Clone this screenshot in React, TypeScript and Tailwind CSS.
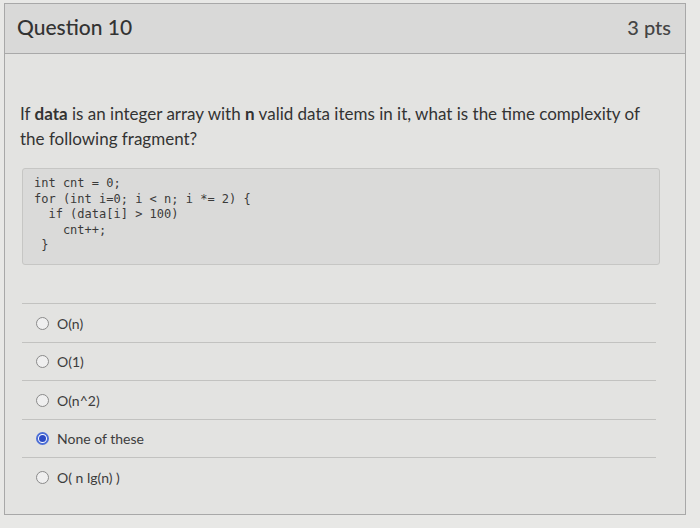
import React from 'react';

const answers = [
  { label: 'O(n)', selected: false },
  { label: 'O(1)', selected: false },
  { label: 'O(n^2)', selected: false },
  { label: 'None of these', selected: true },
  { label: 'O( n lg(n) )', selected: false },
];

const code = `int cnt = 0;
for (int i=0; i < n; i *= 2) {
  if (data[i] > 100)
    cnt++;
 }`;

const Radio: React.FC<{ selected: boolean }> = ({ selected }) =>
  selected ? (
    <span className="w-[13px] h-[13px] rounded-full border-2 border-[#4d6fd6] bg-white flex items-center justify-center">
      <span className="w-[7px] h-[7px] rounded-full bg-[#2c4bc4]" />
    </span>
  ) : (
    <span className="w-[13px] h-[13px] rounded-full border border-[#8a8a8a] bg-[#efefef]" />
  );

export default function App() {
  return (
    <div className="w-[700px] h-[528px] bg-[#e8e8e6] pt-[3px] pl-[4px] overflow-hidden font-['Lato','Noto_Sans',sans-serif]">
      <div className="w-[682px] h-[512px] border border-[#a8a8a8] bg-[#e3e3e1] flex flex-col">
        {/* header */}
        <div className="h-[50px] bg-[#d9d9d8] border-b border-[#a9a9a9] flex items-center justify-between pl-[12px] pr-[14px] pb-[3px]">
          <h2 className="text-[21px] text-[#333] font-medium">Question 10</h2>
          <span className="text-[20px] text-[#444] font-medium">3 pts</span>
        </div>

        {/* body */}
        <div className="px-[15px] pt-[47px]">
          <p className="w-[630px] text-[17px] leading-[25px] text-[#333]">
            If <strong className="font-bold">data</strong> is an integer array with{' '}
            <strong className="font-bold">n</strong> valid data items in it, what is the time complexity of
            the following fragment?
          </p>

          <pre className="mt-[17px] ml-[2px] w-[638px] h-[97px] rounded-[3px] border border-[#c6c6c4] bg-[#dadad9] px-[11px] pt-[7px] text-[12px] leading-[15.5px] text-[#3a3a3a] font-['DejaVu_Sans_Mono','Liberation_Mono',monospace]">
            {code}
          </pre>

          <div className="mt-[38px] ml-[2px] w-[634px]">
            {answers.map((a) => (
              <div
                key={a.label}
                className="h-[38.5px] border-t border-[#c2c2c0] flex items-center gap-[8px] pl-[14px] pt-[1px]"
              >
                <Radio selected={a.selected} />
                <span className="text-[14px] text-[#3d3d3d]">{a.label}</span>
              </div>
            ))}
          </div>
        </div>
      </div>
    </div>
  );
}
